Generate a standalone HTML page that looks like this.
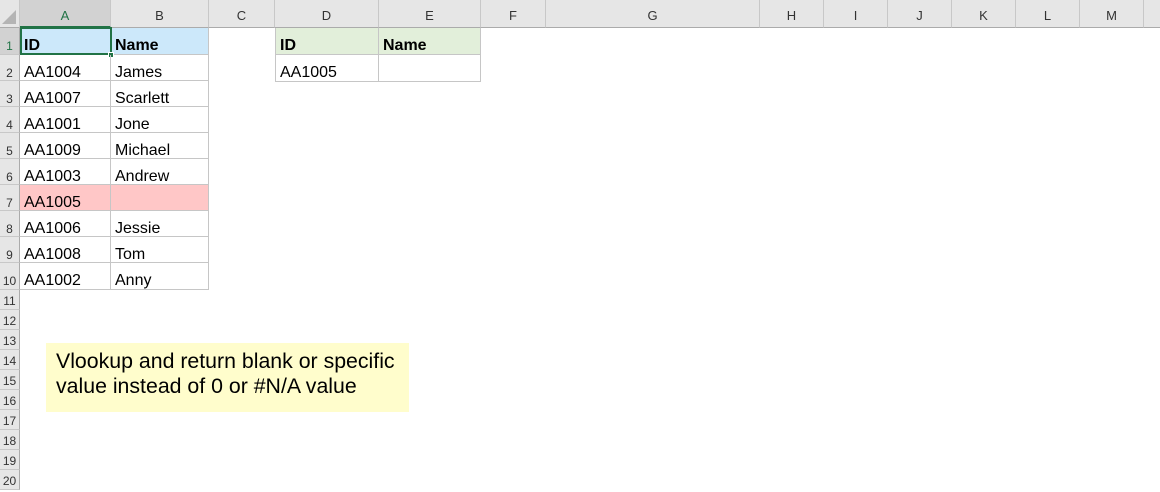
<!DOCTYPE html><html><head><style>
body{margin:0;width:1160px;height:487px;overflow:hidden;background:#fff;font-family:"Liberation Sans",Arial,sans-serif;position:relative}
.a{position:absolute;box-sizing:border-box}
.ch{top:0;height:28px;background:#e6e6e6;border-right:1px solid #c8c8c8;border-bottom:1px solid #ababab;font-size:13px;color:#333;text-align:center;line-height:32px}
.rh{left:0;width:20px;background:#e6e6e6;border-bottom:1px solid #c8c8c8;border-right:1px solid #ababab;font-size:12px;color:#333;text-align:center}
.c{border-right:1px solid #c6c6c6;border-bottom:1px solid #c6c6c6;font-size:16px;color:#000;padding-left:4px;line-height:36px;white-space:nowrap;overflow:hidden}
</style></head><body>
<div class="a ch" style="left:0;width:20px"><svg width="20" height="28" style="position:absolute;left:0;top:0"><polygon points="16,10 16,24 2,24" fill="#b4b4b4"/></svg></div>
<div class="a ch" style="left:20px;width:91px;background:#d2d2d2;border-bottom:2px solid #217346;color:#217346">A</div>
<div class="a ch" style="left:111px;width:98px">B</div>
<div class="a ch" style="left:209px;width:66px">C</div>
<div class="a ch" style="left:275px;width:104px">D</div>
<div class="a ch" style="left:379px;width:102px">E</div>
<div class="a ch" style="left:481px;width:65px">F</div>
<div class="a ch" style="left:546px;width:214px">G</div>
<div class="a ch" style="left:760px;width:64px">H</div>
<div class="a ch" style="left:824px;width:64px">I</div>
<div class="a ch" style="left:888px;width:64px">J</div>
<div class="a ch" style="left:952px;width:64px">K</div>
<div class="a ch" style="left:1016px;width:64px">L</div>
<div class="a ch" style="left:1080px;width:64px">M</div>
<div class="a ch" style="left:1144px;width:30px"></div>

<div class="a rh" style="top:28px;height:27px;line-height:36px;background:#d2d2d2;color:#217346">1</div>
<div class="a rh" style="top:55px;height:26px;line-height:36px">2</div>
<div class="a rh" style="top:81px;height:26px;line-height:36px">3</div>
<div class="a rh" style="top:107px;height:26px;line-height:36px">4</div>
<div class="a rh" style="top:133px;height:26px;line-height:36px">5</div>
<div class="a rh" style="top:159px;height:26px;line-height:36px">6</div>
<div class="a rh" style="top:185px;height:26px;line-height:36px">7</div>
<div class="a rh" style="top:211px;height:26px;line-height:36px">8</div>
<div class="a rh" style="top:237px;height:26px;line-height:36px">9</div>
<div class="a rh" style="top:263px;height:27px;line-height:36px">10</div>
<div class="a rh" style="top:290px;height:20px;line-height:22px">11</div>
<div class="a rh" style="top:310px;height:20px;line-height:22px">12</div>
<div class="a rh" style="top:330px;height:20px;line-height:22px">13</div>
<div class="a rh" style="top:350px;height:20px;line-height:22px">14</div>
<div class="a rh" style="top:370px;height:20px;line-height:22px">15</div>
<div class="a rh" style="top:390px;height:20px;line-height:22px">16</div>
<div class="a rh" style="top:410px;height:20px;line-height:22px">17</div>
<div class="a rh" style="top:430px;height:20px;line-height:22px">18</div>
<div class="a rh" style="top:450px;height:20px;line-height:22px">19</div>
<div class="a rh" style="top:470px;height:20px;line-height:22px">20</div>

<div class="a c" style="left:20px;top:28px;width:91px;height:27px;background:#cce8fa;font-weight:bold">ID</div>
<div class="a c" style="left:111px;top:28px;width:98px;height:27px;background:#cce8fa;font-weight:bold">Name</div>
<div class="a" style="left:20px;top:27px;width:92px;height:28px;border:2px solid #217346"></div>
<div class="a" style="left:108px;top:52px;width:6px;height:6px;background:#217346;border:1px solid #fff"></div>

<div class="a c" style="left:20px;top:55px;width:91px;height:26px">AA1004</div><div class="a c" style="left:111px;top:55px;width:98px;height:26px">James</div>
<div class="a c" style="left:20px;top:81px;width:91px;height:26px">AA1007</div><div class="a c" style="left:111px;top:81px;width:98px;height:26px">Scarlett</div>
<div class="a c" style="left:20px;top:107px;width:91px;height:26px">AA1001</div><div class="a c" style="left:111px;top:107px;width:98px;height:26px">Jone</div>
<div class="a c" style="left:20px;top:133px;width:91px;height:26px">AA1009</div><div class="a c" style="left:111px;top:133px;width:98px;height:26px">Michael</div>
<div class="a c" style="left:20px;top:159px;width:91px;height:26px">AA1003</div><div class="a c" style="left:111px;top:159px;width:98px;height:26px">Andrew</div>
<div class="a c" style="left:20px;top:185px;width:91px;height:26px;background:#ffc7c7">AA1005</div><div class="a c" style="left:111px;top:185px;width:98px;height:26px;background:#ffc7c7"></div>
<div class="a c" style="left:20px;top:211px;width:91px;height:26px">AA1006</div><div class="a c" style="left:111px;top:211px;width:98px;height:26px">Jessie</div>
<div class="a c" style="left:20px;top:237px;width:91px;height:26px">AA1008</div><div class="a c" style="left:111px;top:237px;width:98px;height:26px">Tom</div>
<div class="a c" style="left:20px;top:263px;width:91px;height:27px">AA1002</div><div class="a c" style="left:111px;top:263px;width:98px;height:27px">Anny</div>

<div class="a c" style="left:275px;top:28px;width:104px;height:27px;background:#e2efda;font-weight:bold;border-left:1px solid #c6c6c6">ID</div>
<div class="a c" style="left:379px;top:28px;width:102px;height:27px;background:#e2efda;font-weight:bold">Name</div>
<div class="a c" style="left:275px;top:55px;width:104px;height:27px;border-left:1px solid #c6c6c6">AA1005</div>
<div class="a c" style="left:379px;top:55px;width:102px;height:27px"></div>

<div class="a" style="left:46px;top:343px;width:363px;height:69px;background:#fffdcc;font-size:21.3px;line-height:25px;padding:6px 0 0 10px;color:#000;white-space:nowrap;overflow:hidden">Vlookup and return blank or specific<br>value instead of 0 or #N/A value</div>
</body></html>
